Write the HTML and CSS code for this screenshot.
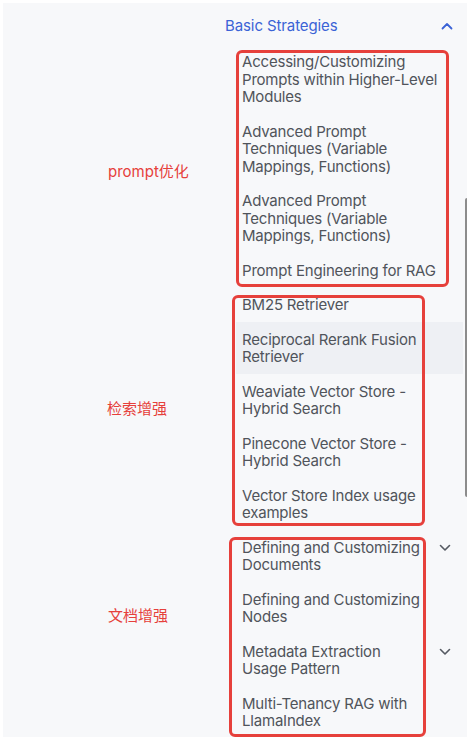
FILE: index.html
```html
<!DOCTYPE html>
<html lang="en">
<head>
<meta charset="utf-8">
<title>Basic Strategies</title>
<link rel="stylesheet" href="styles.css">
</head>
<body>
<div class="frame">
  <nav class="nav">
    <div class="heading">
      <span>Basic Strategies</span>
      <svg class="chev-up" width="12" height="8" viewBox="0 0 12 8"><path d="M1.5 6.5 L6 2 L10.5 6.5" fill="none" stroke="#3b63d6" stroke-width="1.8" stroke-linecap="round" stroke-linejoin="round"/></svg>
    </div>
    <ul class="items">
      <li class="item"><span class="txt">Accessing/Customizing Prompts within Higher-Level Modules</span></li>
      <li class="item"><span class="txt">Advanced Prompt Techniques (Variable Mappings, Functions)</span></li>
      <li class="item"><span class="txt">Advanced Prompt Techniques (Variable Mappings, Functions)</span></li>
      <li class="item"><span class="txt">Prompt Engineering for RAG</span></li>
      <li class="item"><span class="txt">BM25 Retriever</span></li>
      <li class="item active"><span class="txt">Reciprocal Rerank Fusion Retriever</span></li>
      <li class="item"><span class="txt">Weaviate Vector Store - Hybrid Search</span></li>
      <li class="item"><span class="txt">Pinecone Vector Store - Hybrid Search</span></li>
      <li class="item"><span class="txt">Vector Store Index usage examples</span></li>
      <li class="item"><span class="txt">Defining and Customizing Documents</span><svg class="chev" width="12" height="8" viewBox="0 0 12 8"><path d="M1.5 1.5 L6 6 L10.5 1.5" fill="none" stroke="#555a62" stroke-width="1.6" stroke-linecap="round" stroke-linejoin="round"/></svg></li>
      <li class="item"><span class="txt">Defining and Customizing Nodes</span></li>
      <li class="item"><span class="txt">Metadata Extraction Usage Pattern</span><svg class="chev" width="12" height="8" viewBox="0 0 12 8"><path d="M1.5 1.5 L6 6 L10.5 1.5" fill="none" stroke="#555a62" stroke-width="1.6" stroke-linecap="round" stroke-linejoin="round"/></svg></li>
      <li class="item"><span class="txt">Multi-Tenancy RAG with LlamaIndex</span></li>
    </ul>
  </nav>

  <div class="note note-1">prompt优化</div>
  <div class="note note-2">检索增强</div>
  <div class="note note-3">文档增强</div>
  <div class="box box-1"></div>
  <div class="box box-2"></div>
  <div class="box box-3"></div>
  <div class="thumb"></div>
</div>
</body>
</html>
```

FILE: styles.css
```css
html, body {
  margin: 0;
  padding: 0;
  background: #ffffff;
  height: 741px;
  overflow: hidden;
}

.frame {
  position: relative;
  margin: 3px 7px 0 3px;
  height: 734px;
  background: #f7f8fa;
  overflow: hidden;
  display: flex;
  justify-content: flex-end;
  padding-right: 4px;
  font-family: Inter, "Noto Sans CJK SC", sans-serif;
  font-size: 15px;
}

.nav {
  width: 238px;
  display: flex;
  flex-direction: column;
}

.heading {
  display: flex;
  align-items: center;
  justify-content: space-between;
  padding: 13px 10px 8.75px 0;
  line-height: 20px;
  color: #3b63d6;
  letter-spacing: -0.1px;
}

.chev-up {
  display: block;
}

.items {
  list-style: none;
  margin: 0 0 0 11px;
  padding: 0;
}

.item {
  display: flex;
  align-items: flex-start;
  padding: 8.5px 10px 8.5px 6px;
  line-height: 17.5px;
  color: #50545b;
  letter-spacing: -0.2px;
}

.item.active {
  background: #eef0f4;
}

.txt {
  flex: 1;
  padding-right: 11px;
}

.chev {
  flex: none;
  width: 16px;
  height: 8px;
  margin-top: 5px;
}

.note {
  position: absolute;
  color: #e6403b;
  font-size: 15px;
  line-height: 20px;
  white-space: nowrap;
}

.note-1 { left: 105px; top: 159px; }
.note-2 { left: 104px; top: 396px; }
.note-3 { left: 105px; top: 603px; }

.box {
  position: absolute;
  border: 3px solid #e6403b;
  border-radius: 6px;
  box-sizing: border-box;
}

.box-1 { left: 233px; top: 47px; width: 213px; height: 237px; }
.box-2 { left: 229px; top: 292px; width: 193px; height: 231px; }
.box-3 { left: 226px; top: 534px; width: 197px; height: 200px; }

.thumb {
  position: absolute;
  left: 462px;
  top: 195px;
  width: 4px;
  height: 299px;
  border-radius: 2px;
  background: #8c8c8c;
}
```
